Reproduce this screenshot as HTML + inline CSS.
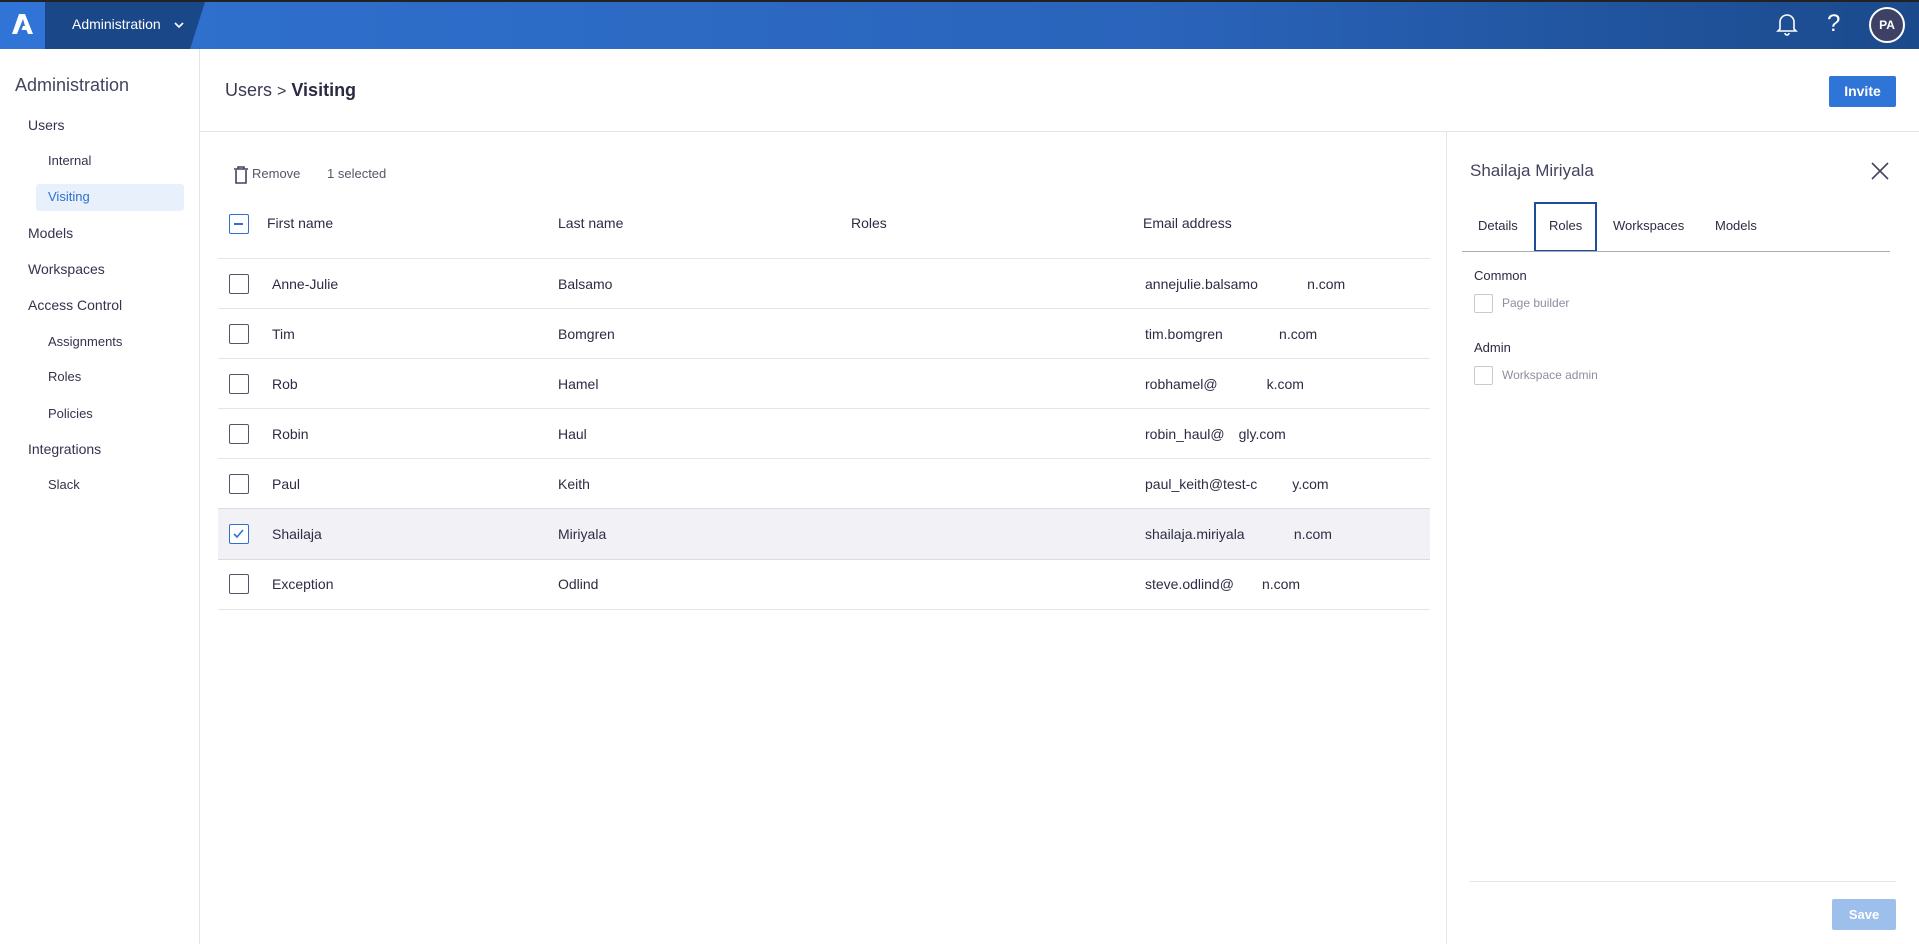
<!DOCTYPE html>
<html><head><meta charset="utf-8"><style>
*{box-sizing:border-box;margin:0;padding:0}
body{width:1919px;height:944px;overflow:hidden;font-family:"Liberation Sans",sans-serif;color:#2c2c44;background:#fff;position:relative}
.abs{position:absolute}
.top{left:0;top:0;width:1919px;height:49px;background:linear-gradient(90deg,#2f72d0 0%,#2a64bb 60%,#1b4a8c 100%);border-top:2px solid #222}
.side{left:0;top:49px;width:200px;height:895px;border-right:1px solid #e3e3ea}
.side div{position:absolute;font-size:14px;color:#33334d}
.t{font-size:14px;color:#2c2c44;position:absolute;white-space:nowrap}
.cb{position:absolute;width:20px;height:20px;border:1.5px solid #55556a;border-radius:2px;background:#fff}
.line{position:absolute;height:1px;background:#e4e4ec}
</style></head><body>
<div class="abs top"></div>
<div class="abs" style="left:0;top:2px;width:45px;height:47px;background:#2f74d6"></div>
<svg class="abs" style="left:12px;top:14px" width="22" height="20" viewBox="0 0 22 20"><path d="M7 0h6l8 20h-5l-1.5-4h-5l1.5-4h2L11 5 5 20H0z" fill="#fff"/></svg>
<svg class="abs" style="left:45px;top:2px" width="160" height="47"><path d="M0 0H160L145 47H0z" fill="#1a4788"/></svg>
<div class="abs" style="left:72px;top:16px;color:#fff;font-size:14px">Administration</div>
<svg class="abs" style="left:174px;top:22px" width="10" height="8"><path d="M1 1l4 4 4-4" stroke="#fff" stroke-width="1.6" fill="none"/></svg>
<svg class="abs" style="left:1776px;top:12px" width="22" height="24" viewBox="0 0 22 24"><path d="M4 17V10a7 7 0 0114 0v7l2 2H2z M9 21a2 2 0 004 0" stroke="#fff" stroke-width="1.6" fill="none"/></svg>
<div class="abs" style="left:1827px;top:10px;color:#fff;font-size:24px">?</div>
<div class="abs" style="left:1869px;top:7px;width:36px;height:36px;border:2px solid #fff;border-radius:50%;background:#3d4166;color:#fff;font-size:12px;font-weight:bold;text-align:center;line-height:32px">PA</div>

<div class="abs side">
<div style="left:15px;top:26px;font-size:18px;color:#44445e">Administration</div>
<div style="left:28px;top:68px">Users</div>
<div style="left:48px;top:104px;font-size:13px">Internal</div>
<div style="left:36px;top:135px;width:148px;height:27px;background:#e8f0fb;border-radius:3px"></div>
<div style="left:48px;top:140px;font-size:13px;color:#2f6fd0">Visiting</div>
<div style="left:28px;top:176px">Models</div>
<div style="left:28px;top:212px">Workspaces</div>
<div style="left:28px;top:248px">Access Control</div>
<div style="left:48px;top:285px;font-size:13px">Assignments</div>
<div style="left:48px;top:320px;font-size:13px">Roles</div>
<div style="left:48px;top:357px;font-size:13px">Policies</div>
<div style="left:28px;top:392px">Integrations</div>
<div style="left:48px;top:428px;font-size:13px">Slack</div>
</div>

<div class="t" style="left:225px;top:80px;font-size:18px;color:#3a3a52">Users <span style="font-size:16px">&gt;</span> <b style="color:#2a2a40">Visiting</b></div>
<div class="abs" style="left:1829px;top:76px;width:67px;height:31px;background:#2f75d8;border-radius:2px;color:#fff;font-size:14px;font-weight:bold;text-align:center;line-height:31px">Invite</div>
<div class="line" style="left:200px;top:131px;width:1719px"></div>
<div class="abs" style="left:1446px;top:131px;width:1px;height:813px;background:#e4e4ec"></div>

<svg class="abs" style="left:233px;top:166px" width="16" height="18"><path d="M1 3h14M5 3V1h6v2M3 4v13h10V4" stroke="#44445e" stroke-width="1.6" fill="none"/></svg>
<div class="t" style="left:252px;top:166px;font-size:13px;color:#55556a">Remove</div>
<div class="t" style="left:327px;top:166px;font-size:13px;color:#55556a">1 selected</div>

<div class="cb" style="left:229px;top:214px;border-color:#2f6fd0"><div style="position:absolute;left:4px;top:8px;width:9px;height:2px;background:#2f6fd0"></div></div>
<div class="t" style="left:267px;top:215px">First name</div>
<div class="t" style="left:558px;top:215px">Last name</div>
<div class="t" style="left:851px;top:215px">Roles</div>
<div class="t" style="left:1143px;top:215px">Email address</div>
<div class="line" style="left:218px;top:258px;width:1212px"></div>

<div class="abs" style="left:218px;top:509px;width:1212px;height:50px;background:#f2f2f6"></div>
<div class="line" style="left:218px;top:308px;width:1212px"></div>
<div class="line" style="left:218px;top:358px;width:1212px"></div>
<div class="line" style="left:218px;top:408px;width:1212px"></div>
<div class="line" style="left:218px;top:458px;width:1212px"></div>
<div class="line" style="left:218px;top:508px;width:1212px;background:#dcdce6"></div>
<div class="line" style="left:218px;top:559px;width:1212px;background:#dcdce6"></div>
<div class="line" style="left:218px;top:609px;width:1212px"></div>

<div class="cb" style="left:229px;top:274px"></div><div class="t" style="left:272px;top:276px">Anne-Julie</div><div class="t" style="left:558px;top:276px">Balsamo</div><div class="t" style="left:1145px;top:276px">annejulie.balsamo<span style="color:#fff">@xxxxx</span>n.com</div>
<div class="cb" style="left:229px;top:324px"></div><div class="t" style="left:272px;top:326px">Tim</div><div class="t" style="left:558px;top:326px">Bomgren</div><div class="t" style="left:1145px;top:326px">tim.bomgren<span style="color:#fff">@xxxxxx</span>n.com</div>
<div class="cb" style="left:229px;top:374px"></div><div class="t" style="left:272px;top:376px">Rob</div><div class="t" style="left:558px;top:376px">Hamel</div><div class="t" style="left:1145px;top:376px">robhamel@<span style="color:#fff">xxxxxxx</span>k.com</div>
<div class="cb" style="left:229px;top:424px"></div><div class="t" style="left:272px;top:426px">Robin</div><div class="t" style="left:558px;top:426px">Haul</div><div class="t" style="left:1145px;top:426px">robin_haul@<span style="color:#fff">xx</span>gly.com</div>
<div class="cb" style="left:229px;top:474px"></div><div class="t" style="left:272px;top:476px">Paul</div><div class="t" style="left:558px;top:476px">Keith</div><div class="t" style="left:1145px;top:476px">paul_keith@test-c<span style="color:#fff">xxxxx</span>y.com</div>
<div class="cb" style="left:229px;top:524px;border-color:#2f6fd0"><svg style="position:absolute;left:3px;top:4px" width="12" height="10"><path d="M1 5l3 3 6-7" stroke="#2f6fd0" stroke-width="1.6" fill="none"/></svg></div><div class="t" style="left:272px;top:526px">Shailaja</div><div class="t" style="left:558px;top:526px">Miriyala</div><div class="t" style="left:1145px;top:526px">shailaja.miriyala<span style="color:#f2f2f6">@xxxxx</span>n.com</div>
<div class="cb" style="left:229px;top:574px"></div><div class="t" style="left:272px;top:576px">Exception</div><div class="t" style="left:558px;top:576px">Odlind</div><div class="t" style="left:1145px;top:576px">steve.odlind@<span style="color:#fff">xxxx</span>n.com</div>

<div class="t" style="left:1470px;top:161px;font-size:17px;color:#44445e">Shailaja Miriyala</div>
<svg class="abs" style="left:1871px;top:162px" width="18" height="18"><path d="M1 1l16 16M17 1L1 17" stroke="#44445e" stroke-width="1.6"/></svg>
<div class="t" style="left:1478px;top:218px;font-size:13px">Details</div>
<div class="abs" style="left:1534px;top:202px;width:63px;height:50px;border:2px solid #1d4f96"></div>
<div class="t" style="left:1549px;top:218px;font-size:13px">Roles</div>
<div class="t" style="left:1613px;top:218px;font-size:13px">Workspaces</div>
<div class="t" style="left:1715px;top:218px;font-size:13px">Models</div>
<div class="abs" style="left:1462px;top:251px;width:428px;height:1px;background:#aaaab8"></div>
<div class="t" style="left:1474px;top:268px;font-size:13px">Common</div>
<div class="cb" style="left:1474px;top:294px;border-color:#c8c8d2;width:19px;height:19px"></div>
<div class="t" style="left:1502px;top:296px;font-size:12px;color:#8e8ea0">Page builder</div>
<div class="t" style="left:1474px;top:340px;font-size:13px">Admin</div>
<div class="cb" style="left:1474px;top:366px;border-color:#c8c8d2;width:19px;height:19px"></div>
<div class="t" style="left:1502px;top:368px;font-size:12px;color:#8e8ea0">Workspace admin</div>
<div class="line" style="left:1470px;top:881px;width:426px"></div>
<div class="abs" style="left:1832px;top:899px;width:64px;height:31px;background:#9cbfec;border-radius:2px;color:#fff;font-size:13px;font-weight:bold;text-align:center;line-height:31px">Save</div>
</body></html>
